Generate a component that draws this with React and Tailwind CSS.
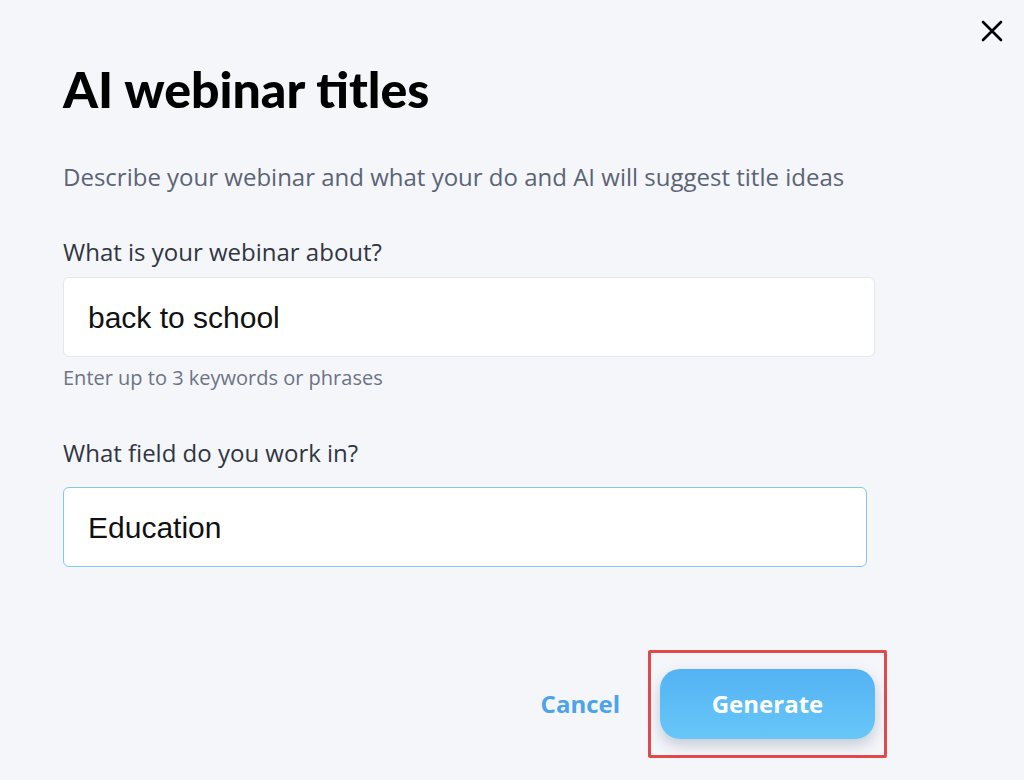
import React from 'react'

const Field = ({ label, value, focused, hint, width, gap }) => (
  <div className="flex flex-col">
    <label className="text-[24px] leading-[30px] text-[#2f3642]">{label}</label>
    <div
      className={`h-[80px] bg-white rounded-[6px] border flex items-center pl-[24px] ${
        focused ? 'border-[#86c5ec]' : 'border-[#e4e7ee]'
      } ${width} ${gap}`}
    >
      <span className="text-[30px] text-[#111] font-['Liberation_Sans',sans-serif]">{value}</span>
    </div>
    {hint && <p className="mt-[9px] text-[20px] leading-[24px] text-[#6b7384]">{hint}</p>}
  </div>
)

export default function App() {
  return (
    <div className="w-[1024px] h-[780px] bg-[#f5f6fa] relative font-['Open_Sans',sans-serif] overflow-hidden">
      <button className="absolute top-[19px] right-[20px] text-black">
        <svg width="24" height="24" viewBox="0 0 24 24" fill="none" stroke="currentColor" strokeWidth="2.6" strokeLinecap="round">
          <path d="M3 3l18 18M21 3L3 21" />
        </svg>
      </button>

      <div className="pl-[63px] pt-[61px] pr-[149px]">
        <h1 className="text-[50px] leading-[56px] font-['Lato',sans-serif] font-black text-black">AI webinar titles</h1>
        <p className="mt-[45px] text-[24px] leading-[30px] text-[#5b6475]">
          Describe your webinar and what your do and AI will suggest title ideas
        </p>

        <div className="mt-[45px] flex flex-col gap-[48px]">
          <Field
            label="What is your webinar about?"
            value="back to school"
            hint="Enter up to 3 keywords or phrases"
            width="w-[812px]"
            gap="mt-[10px]"
          />
          <Field label="What field do you work in?" value="Education" focused width="w-[804px]" gap="mt-[19px]" />
        </div>

        <div className="mt-[83px] -mr-[12px] flex items-center justify-end gap-[28px]">
          <button className="text-[24px] font-bold text-[#4da3ea]">Cancel</button>
          <div className="border-[3px] border-[#e04a4c] rounded-[2px] px-[9px] py-[16px]">
            <button className="w-[215px] h-[70px] rounded-[20px] bg-gradient-to-b from-[#53b2f3] to-[#67c7f8] text-white text-[24px] font-bold shadow-[0_6px_14px_rgba(70,90,120,0.28)]">
              Generate
            </button>
          </div>
        </div>
      </div>
    </div>
  )
}
